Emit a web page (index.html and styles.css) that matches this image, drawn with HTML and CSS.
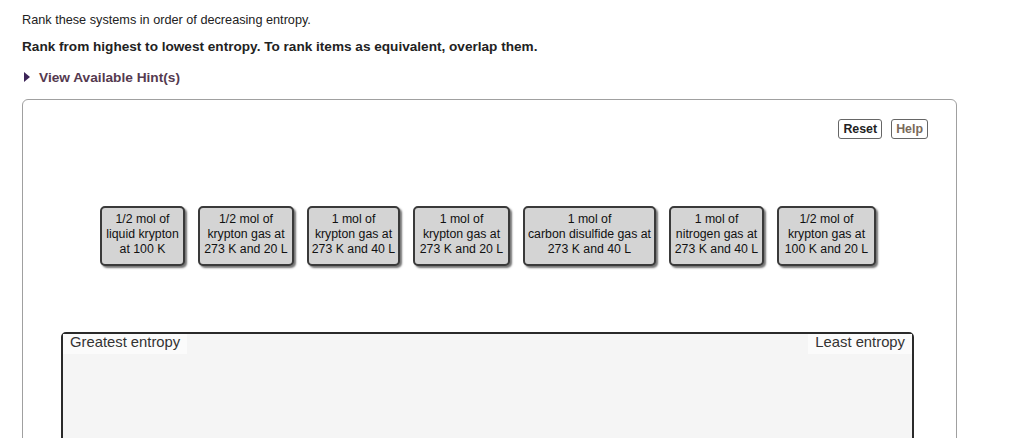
FILE: index.html
```html
<!DOCTYPE html>
<html lang="en">

<head>
  <meta charset="UTF-8">
  <meta name="viewport" content="width=device-width, initial-scale=1.0">
  <title>Ranking task</title>
  <link rel="stylesheet" href="styles.css">
</head>

<body>
  <div class="page">
    <p class="prompt">Rank these systems in order of decreasing entropy.</p>
    <p class="instruction">Rank from highest to lowest entropy. To rank items as equivalent, overlap them.</p>
    <div class="hint"><span class="arrow"></span>View Available Hint(s)</div>

    <div class="panel">
      <div class="toolbar">
        <button class="tool-btn">Reset</button>
        <button class="tool-btn help">Help</button>
      </div>

      <div class="cards">
        <div class="card">1/2 mol of<br>liquid krypton<br>at 100 K</div>
        <div class="card">1/2 mol of<br>krypton gas at<br>273 K and 20 L</div>
        <div class="card">1 mol of<br>krypton gas at<br>273 K and 40 L</div>
        <div class="card">1 mol of<br>krypton gas at<br>273 K and 20 L</div>
        <div class="card">1 mol of<br>carbon disulfide gas at<br>273 K and 40 L</div>
        <div class="card">1 mol of<br>nitrogen gas at<br>273 K and 40 L</div>
        <div class="card">1/2 mol of<br>krypton gas at<br>100 K and 20 L</div>
      </div>

      <div class="ranking">
        <span class="label">Greatest entropy</span>
        <span class="label">Least entropy</span>
      </div>
    </div>
  </div>
</body>

</html>
```

FILE: styles.css
```css
* {
  margin: 0;
  padding: 0;
  box-sizing: border-box;
}

body {
  font-family: "Liberation Sans", Arial, sans-serif;
  background-color: #fff;
  color: #222;
  overflow: hidden;
}

.page {
  padding: 12px 0 0 22px;
}

.prompt {
  font-size: 12.7px;
  line-height: 16px;
}

.instruction {
  font-size: 13.6px;
  font-weight: bold;
  line-height: 16px;
  margin-top: 11px;
}

.hint {
  font-size: 13.7px;
  font-weight: bold;
  color: #553a4f;
  line-height: 16px;
  margin-top: 15px;
  display: flex;
  align-items: center;
}

.arrow {
  width: 0;
  height: 0;
  border-top: 5px solid transparent;
  border-bottom: 5px solid transparent;
  border-left: 6px solid #3d2458;
  margin: 0 9px 2px 2px;
}

.panel {
  margin-top: 13px;
  width: 935px;
  height: 400px;
  border: 1px solid #a0a0a0;
  border-radius: 6px;
}

.toolbar {
  display: flex;
  justify-content: flex-end;
  gap: 9px;
  padding: 19px 28px 0 0;
}

.tool-btn {
  font-family: "Liberation Sans", Arial, sans-serif;
  font-size: 12.4px;
  font-weight: bold;
  color: #222;
  background: #fff;
  border: 1px solid #666;
  border-radius: 3px;
  height: 20px;
  padding: 0 4px;
}

.tool-btn.help {
  color: #7a6a5a;
}

.cards {
  display: flex;
  gap: 13px;
  padding-left: 77px;
  margin-top: 67px;
}

.card {
  flex: none;
  font-size: 12.3px;
  line-height: 15px;
  text-align: center;
  background: #d4d4d4;
  border: 2px solid #3a3a3a;
  border-radius: 5px;
  padding: 4px 0 7px;
  box-shadow: 2px 2px 2px rgba(0, 0, 0, 0.55);
  color: #111;
  white-space: nowrap;
}

.card:nth-child(1) { width: 85px; }
.card:nth-child(2) { width: 96px; }
.card:nth-child(3) { width: 93px; }
.card:nth-child(4) { width: 97px; }
.card:nth-child(5) { width: 133px; }
.card:nth-child(6) { width: 95px; }
.card:nth-child(7) { width: 99px; }

.ranking {
  margin: 66px 0 0 38px;
  width: 853px;
  height: 200px;
  background: #f5f5f5;
  border: 2px solid #2a2a2a;
  border-radius: 5px;
  display: flex;
  justify-content: space-between;
  align-items: flex-start;
}

.label {
  font-size: 14.8px;
  line-height: 17px;
  color: #333;
  background: #fbfbfb;
  padding: 0 7px 3px;
}
```
